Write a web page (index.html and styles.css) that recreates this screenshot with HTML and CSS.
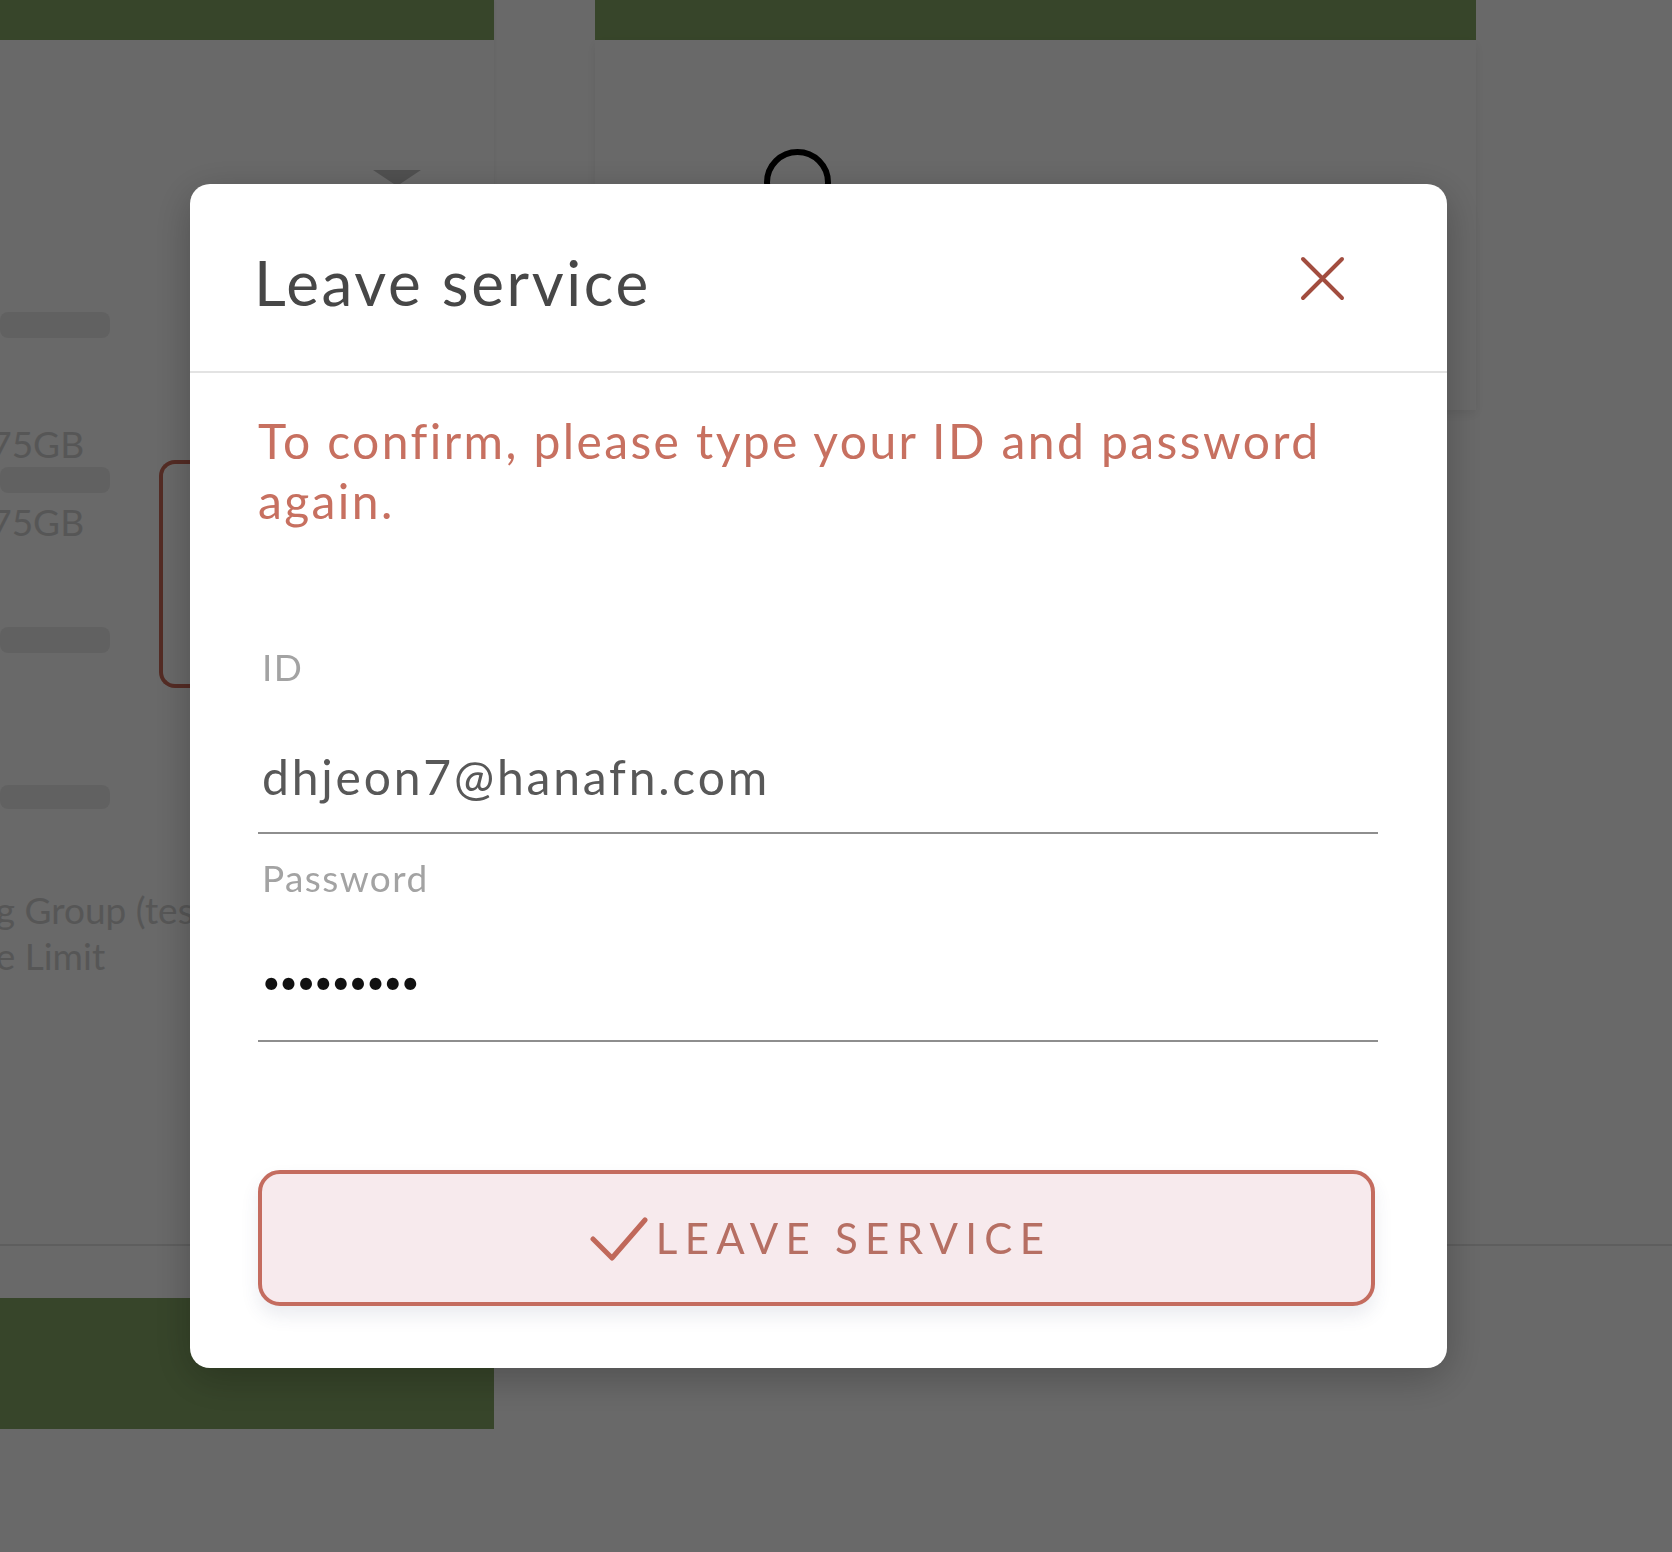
FILE: index.html
```html
<!DOCTYPE html>
<html lang="en">
<head>
<meta charset="utf-8">
<title>Leave service</title>
<link rel="stylesheet" href="styles.css">
</head>
<body>
  <div class="page">
    <div class="columns">
      <section class="col-left">
        <div class="green-strip"></div>
        <div class="caret-row"><span class="caret"></span></div>
        <div class="usage">
          <div class="usage-list">
            <div class="skel skel-1"></div>
            <div class="qty">0.75GB</div>
            <div class="skel skel-2"></div>
            <div class="qty qty-2">0.75GB</div>
            <div class="skel skel-3"></div>
            <div class="skel skel-4"></div>
          </div>
          <div class="usage-side">
            <div class="outlined"></div>
          </div>
        </div>
        <div class="group-lines">
          <div class="group-line">Sharing Group (test)</div>
          <div class="group-line limit">Usage Limit</div>
        </div>
      </section>
      <section class="col-right">
        <div class="green-strip"></div>
        <div class="profile-card">
          <div class="ring"></div>
        </div>
      </section>
    </div>
    <div class="page-rule"></div>
    <div class="bottom-row">
      <div class="green-block"></div>
    </div>
  </div>

  <div class="backdrop">
    <div class="modal" role="dialog" aria-labelledby="modal-title">
      <header class="modal-head">
        <h2 id="modal-title" class="modal-title">Leave service</h2>
        <button class="close-btn" type="button" aria-label="Close">
          <svg width="45" height="45" viewBox="0 0 45 45" fill="none" stroke="currentColor" stroke-width="4" stroke-linecap="round">
            <path d="M3 3 L42 42 M42 3 L3 42"/>
          </svg>
        </button>
      </header>
      <div class="modal-body">
        <p class="notice">To confirm, please type your ID and password again.</p>
        <label class="field">
          <span class="field-label">ID</span>
          <input class="field-input" type="text" value="dhjeon7@hanafn.com">
        </label>
        <label class="field">
          <span class="field-label">Password</span>
          <input class="field-input pw" type="password" value="123456789">
        </label>
        <button class="leave-btn" type="button">
          <svg class="check" width="58" height="44" viewBox="0 0 58 44" fill="none" stroke="currentColor" stroke-width="5" stroke-linecap="round" stroke-linejoin="round">
            <path d="M3 22 L22 41 L55 3"/>
          </svg>
          <span>LEAVE SERVICE</span>
        </button>
      </div>
    </div>
  </div>
</body>
</html>
```

FILE: styles.css
```css
* { box-sizing: border-box; }

html, body {
  margin: 0;
  padding: 0;
}

body {
  width: 1672px;
  height: 1552px;
  overflow: hidden;
  font-family: "Lato", "Open Sans", sans-serif;
  background: #ffffff;
}

/* ---------- page behind the dialog ---------- */
.page {
  display: flex;
  flex-direction: column;
  height: 1552px;
  background: #ffffff;
}

.columns {
  display: flex;
  gap: 101px;
  height: 1244px;
}

.col-left {
  width: 494px;
  overflow: hidden;
  box-shadow: 1px 0 3px rgba(0, 0, 0, 0.05);
}

.col-right {
  width: 881px;
}

.green-strip {
  height: 40px;
  background: #86a866;
}

.caret-row {
  display: flex;
  justify-content: flex-end;
  padding: 130px 73px 0 0;
}

.caret {
  width: 0;
  height: 0;
  border-left: 24px solid transparent;
  border-right: 24px solid transparent;
  border-top: 16px solid #c2c2c2;
}

.usage {
  display: flex;
  gap: 19px;
  margin-top: 126px;
}

.usage-list {
  width: 140px;
  display: flex;
  flex-direction: column;
}

.skel {
  width: 110px;
  height: 26px;
  border-radius: 8px;
  background: #ececec;
}

.qty {
  margin: 86px 0 0 -40px;
  height: 40px;
  line-height: 40px;
  font-size: 37px;
  color: #d2d2d2;
  white-space: nowrap;
}

.skel-2 { margin-top: 3px; }
.qty-2 { margin-top: 9px; }
.skel-3 { margin-top: 85px; }
.skel-4 { margin-top: 132px; height: 24px; }

.usage-side {
  flex: 1;
  padding-top: 148px;
}

.outlined {
  height: 228px;
  border: 4px solid #cc6a58;
  border-right: 0;
  border-radius: 16px 0 0 16px;
}

.group-lines {
  margin-top: 78px;
  white-space: nowrap;
}

.group-line {
  height: 46px;
  line-height: 46px;
  font-size: 37px;
  color: #d2d2d2;
  margin-left: -106px;
}

.group-line.limit {
  margin-left: -84px;
}

.profile-card {
  height: 370px;
  padding: 109px 0 0 169px;
  box-shadow: 0 4px 10px rgba(0, 0, 0, 0.08);
}

.ring {
  width: 67px;
  height: 67px;
  border: 6px solid #000000;
  border-radius: 50%;
}

.page-rule {
  height: 2px;
  background: #e4e4e4;
}

.bottom-row {
  padding-top: 52px;
}

.green-block {
  width: 494px;
  height: 131px;
  background: #86a866;
}

/* ---------- dialog ---------- */
.backdrop {
  position: fixed;
  inset: 0;
  background: rgba(0, 0, 0, 0.59);
  display: flex;
  align-items: center;
  padding-left: 190px;
}

.modal {
  width: 1257px;
  height: 1184px;
  background: #ffffff;
  border-radius: 20px;
  box-shadow: 0 10px 40px rgba(0, 0, 0, 0.25);
  display: flex;
  flex-direction: column;
}

.modal-head {
  height: 189px;
  border-bottom: 2px solid #e3e3e3;
  display: flex;
  align-items: center;
  justify-content: space-between;
  padding: 8px 102px 0 64px;
}

.modal-title {
  margin: 0;
  font-size: 62px;
  font-weight: 400;
  color: #474747;
  letter-spacing: 2.6px;
}

.close-btn {
  border: 0;
  background: none;
  padding: 0;
  margin-top: -6px;
  color: #a24d3f;
  display: flex;
}

.modal-body {
  padding: 38px 69px 0 68px;
  display: flex;
  flex-direction: column;
}

.notice {
  margin: 0;
  font-size: 48px;
  line-height: 60px;
  color: #c77060;
  letter-spacing: 2.4px;
}

.field {
  display: flex;
  flex-direction: column;
}

.field:first-of-type {
  margin-top: 116px;
}

.field + .field {
  margin-top: 24px;
}

.field-label {
  height: 40px;
  line-height: 40px;
  font-size: 37px;
  color: #a3a3a3;
  padding-left: 4px;
  letter-spacing: 1.4px;
}

.field-input {
  margin-top: 33px;
  height: 114px;
  width: 100%;
  padding: 0 0 0 4px;
  border: 0;
  border-bottom: 2px solid #8e8e8e;
  background: transparent;
  font-family: "Lato", "Open Sans", sans-serif;
  font-size: 48px;
  letter-spacing: 2.8px;
  color: #585858;
  outline: none;
}

.field-input.pw {
  height: 111px;
  padding-bottom: 8px;
  font-size: 32px;
  letter-spacing: -1.2px;
  color: #111111;
}

.leave-btn {
  margin: 128px 3px 0 0;
  height: 136px;
  padding: 0 0 0 8px;
  border: 4px solid #c46c5f;
  border-radius: 22px;
  background: #f7eaed;
  box-shadow: 0 10px 18px rgba(60, 70, 110, 0.10);
  color: #b66f63;
  display: flex;
  align-items: center;
  justify-content: center;
  gap: 8px;
  font-family: "Lato", "Open Sans", sans-serif;
  font-size: 42px;
  letter-spacing: 7.3px;
}

.check {
  color: #c0685a;
  margin-top: 2px;
}
```
